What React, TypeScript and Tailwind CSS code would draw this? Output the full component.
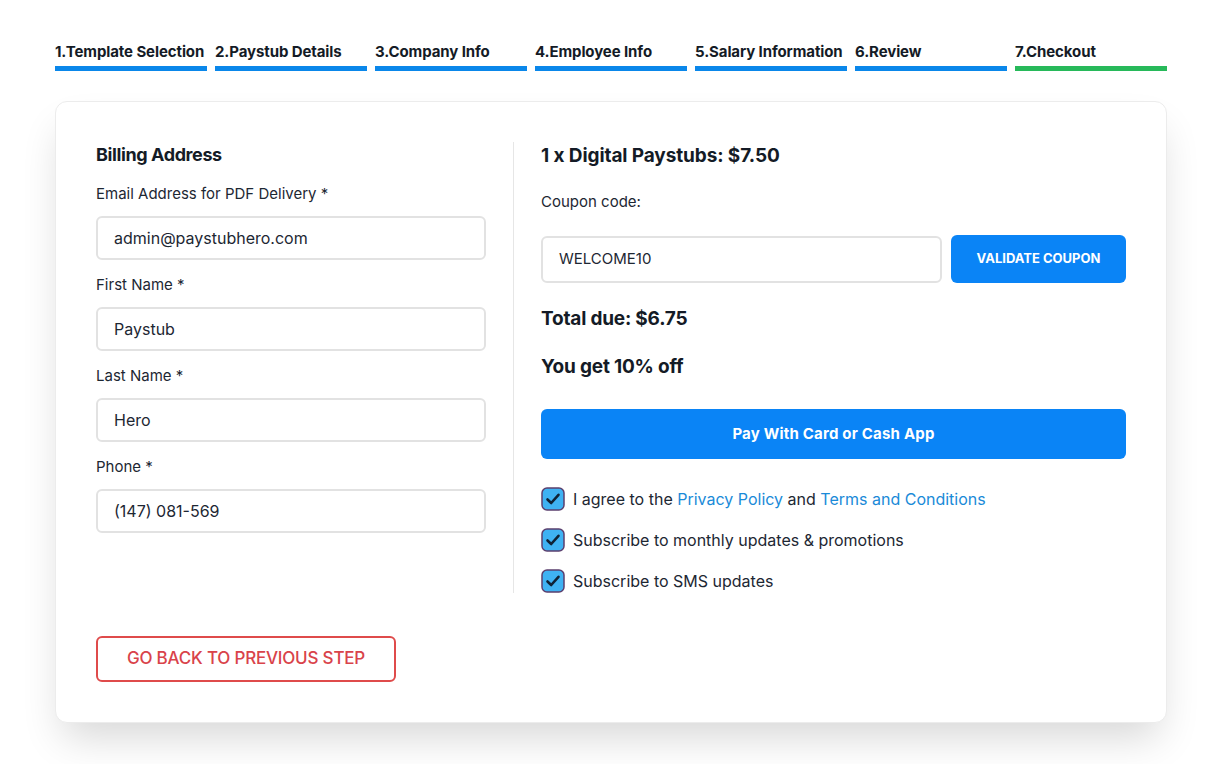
import React from 'react';

const steps = [
    '1.Template Selection',
    '2.Paystub Details',
    '3.Company Info',
    '4.Employee Info',
    '5.Salary Information',
    '6.Review',
    '7.Checkout',
];

function Field({ label, value, first }: { label: string; value: string; first?: boolean }) {
    return (
        <div className={first ? 'mt-[16px]' : 'mt-[15px]'}>
            <div className="text-[15px] leading-[20px] text-[#1d2733]">{label}</div>
            <div className="mt-[12px] h-[44px] w-[390px] rounded-[6px] border-2 border-[#e2e2e2] px-[16px] flex items-center text-[16px] text-[#1d2733]">
                {value}
            </div>
        </div>
    );
}

function Check({ children }: { children: React.ReactNode }) {
    return (
        <div className="flex items-center h-[24px] gap-[8px]">
            <svg width="24" height="24" viewBox="0 0 24 24" className="shrink-0">
                <rect x="1" y="1" width="22" height="22" rx="5" fill="#3fb2f3" stroke="#5b3f6e" strokeWidth="1.5" />
                <path d="M6.5 12.5 L10.2 16 L17.5 7.8" fill="none" stroke="#0f2236" strokeWidth="2.6" strokeLinecap="round" strokeLinejoin="round" />
            </svg>
            <span className="text-[16px] text-[#1d2733]">{children}</span>
        </div>
    );
}

export default function App() {
    return (
        <div className="min-h-screen bg-white px-[55px] pt-[42px] pb-[40px]" style={{ fontFamily: 'Inter, "Open Sans", sans-serif' }}>
            {/* Step progress */}
            <div className="grid grid-cols-7 gap-[8px]">
                {steps.map((s, i) => (
                    <div key={s}>
                        <div className="text-[15px] leading-[20px] font-bold tracking-[-0.1px] text-[#141b26] whitespace-nowrap">{s}</div>
                        <div className={`mt-[4px] h-[5px] ${i === 6 ? 'bg-[#27b95a]' : 'bg-[#0a87ea]'}`}></div>
                    </div>
                ))}
            </div>

            {/* Checkout card */}
            <div className="mt-[30px] rounded-[12px] border border-[#ececec] bg-white pl-[40px] pr-[40px] pt-[40px] pb-[40px] shadow-[0_22px_40px_-8px_rgba(0,0,0,0.16)]">
                <div className="flex">
                    <div className="w-[418px] border-r border-[#e6e6e6]">
                        <div className="text-[18px] leading-[26px] font-bold tracking-[-0.4px] text-[#141b26]">Billing Address</div>
                        <Field first label="Email Address for PDF Delivery *" value="admin@paystubhero.com" />
                        <Field label="First Name *" value="Paystub" />
                        <Field label="Last Name *" value="Hero" />
                        <Field label="Phone *" value="(147) 081-569" />
                    </div>

                    <div className="flex-1 pl-[27px]">
                        <div className="text-[19px] leading-[28px] font-bold tracking-[-0.1px] text-[#141b26]">1 x Digital Paystubs: $7.50</div>
                        <div className="mt-[22px] text-[15px] leading-[20px] text-[#1d2733]">Coupon code:</div>
                        <div className="mt-[24px] flex gap-[9px]">
                            <div className="h-[47px] w-[401px] rounded-[6px] border-2 border-[#e2e2e2] px-[16px] flex items-center text-[15px] text-[#1d2733]">
                                WELCOME10
                            </div>
                            <button className="h-[48px] flex-1 -mt-px rounded-[6px] bg-[#0a84f6] text-white text-[13px] font-bold">
                                VALIDATE COUPON
                            </button>
                        </div>
                        <div className="mt-[22px] text-[19px] leading-[28px] font-bold tracking-[-0.2px] text-[#141b26]">Total due: $6.75</div>
                        <div className="mt-[20px] text-[19px] leading-[28px] font-bold tracking-[-0.2px] text-[#141b26]">You get 10% off</div>
                        <button className="mt-[28px] h-[50px] w-full rounded-[6px] bg-[#0a84f6] text-white text-[15px] font-bold tracking-[0.2px]">
                            Pay With Card or Cash App
                        </button>
                        <div className="mt-[28px] flex flex-col gap-[17px]">
                            <Check>
                                I agree to the <span className="text-[#1a8ad8]">Privacy Policy</span> and{' '}
                                <span className="text-[#1a8ad8]">Terms and Conditions</span>
                            </Check>
                            <Check>Subscribe to monthly updates &amp; promotions</Check>
                            <Check>Subscribe to SMS updates</Check>
                        </div>
                    </div>
                </div>

                <button className="mt-[43px] h-[46px] w-[300px] rounded-[6px] border-2 border-[#df4b4b] text-[#d9434a] text-[17px] font-medium tracking-[-0.2px]">
                    GO BACK TO PREVIOUS STEP
                </button>
            </div>
        </div>
    );
}
